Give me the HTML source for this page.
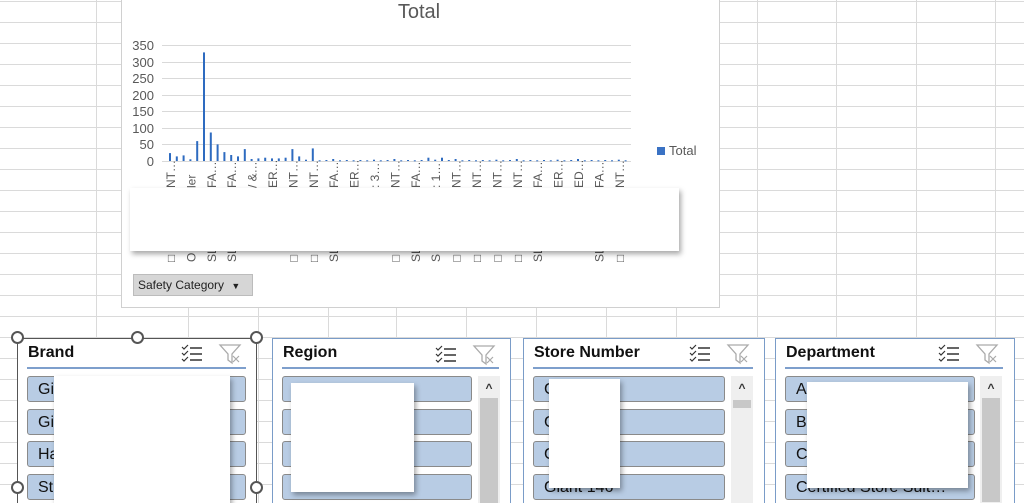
<!DOCTYPE html>
<html><head><meta charset="utf-8"><style>
*{margin:0;padding:0;box-sizing:border-box}
html,body{width:1024px;height:503px;overflow:hidden}
body{background:#fff;position:relative;font-family:"Liberation Sans",Arial,sans-serif}
.abs{position:absolute}
.slicer{position:absolute;top:338px;height:170px;border:1px solid #7a9cc8;background:#fff;overflow:hidden}
.slicer .hd{position:absolute;left:10px;top:5px;font-weight:bold;font-size:16px;color:#111}
.slicer .ln{position:absolute;left:9px;top:28px;height:2px;background:#7e9fcc}
.item{position:absolute;height:26px;background:#b8cce4;border:1px solid #8a8a8a;border-radius:3px;font-size:16px;line-height:25px;padding-left:10px;color:#111;white-space:nowrap;overflow:hidden}
.sb{position:absolute;width:22px;top:37px;height:140px;background:#efefef}
.sb .th{position:absolute;left:2px;right:2px;background:#c8c8c8}
.sb .ar{position:absolute;left:0;right:0;top:0;height:22px;text-align:center;font-size:12px;font-weight:bold;color:#333;line-height:24px}
.ov{position:absolute;background:#fff;box-shadow:2px 3px 5px rgba(0,0,0,.35)}
.h{position:absolute;width:13px;height:13px;border:2px solid #555;border-radius:50%;background:#fff}
</style></head><body>
<svg class="abs" style="left:0;top:0" width="1024" height="503">
<g stroke="#dadada" stroke-width="1" id="grid"></g>
</svg>
<div class="abs" style="left:121px;top:-2px;width:599px;height:310px;background:#fff;border:1px solid #d0d0d0"></div>
<svg class="abs" style="left:0;top:0" width="1024" height="503" id="ch">
<text x="419" y="18" font-size="20" fill="#595959" text-anchor="middle" font-family="Liberation Sans">Total</text>
<g font-size="13" fill="#595959" text-anchor="end" font-family="Liberation Sans">
<text x="154" y="50">350</text><text x="154" y="67">300</text><text x="154" y="83">250</text><text x="154" y="100">200</text><text x="154" y="116">150</text><text x="154" y="133">100</text><text x="154" y="149">50</text><text x="154" y="166">0</text>
</g>
<g stroke="#d9d9d9" stroke-width="1">
<line x1="162" x2="631" y1="45.5" y2="45.5"/><line x1="162" x2="631" y1="62.5" y2="62.5"/><line x1="162" x2="631" y1="78.5" y2="78.5"/><line x1="162" x2="631" y1="95.5" y2="95.5"/><line x1="162" x2="631" y1="111.5" y2="111.5"/><line x1="162" x2="631" y1="128.5" y2="128.5"/><line x1="162" x2="631" y1="144.5" y2="144.5"/><line x1="162" x2="631" y1="161.5" y2="161.5"/>
</g>
<g id="bars" fill="#2e6bc0"></g>
<g id="lbl" font-size="12" fill="#595959" font-family="Liberation Sans"></g>
<rect x="657" y="147" width="8" height="8" fill="#3a72c4"/>
<text x="669" y="155" font-size="13" fill="#595959" font-family="Liberation Sans">Total</text>
</svg>
<div class="ov" style="left:130px;top:188px;width:549px;height:63px"></div>
<div class="abs" style="left:133px;top:274px;width:120px;height:22px;background:#d6d6d6;border:1px solid #bcbcbc;font-size:12px;line-height:21px;padding-left:4px;color:#222">Safety Category <span style="font-size:9px;margin-left:4px">▼</span></div>

<div class="slicer" style="left:17px;width:240px;border-color:#555">
<div class="hd">Brand</div><div class="ln" style="width:219px"></div>
<div class="item" style="left:9px;top:37px;width:219px">Gi</div>
<div class="item" style="left:9px;top:70px;width:219px">Gi</div>
<div class="item" style="left:9px;top:102px;width:219px">Ha</div>
<div class="item" style="left:9px;top:135px;width:219px">St</div>
</div>
<div class="slicer" style="left:272px;width:239px">
<div class="hd">Region</div><div class="ln" style="width:217px"></div>
<div class="item" style="left:9px;top:37px;width:190px"></div>
<div class="item" style="left:9px;top:70px;width:190px"></div>
<div class="item" style="left:9px;top:102px;width:190px"></div>
<div class="item" style="left:9px;top:135px;width:190px"></div>
<div class="sb" style="left:205px"><div class="ar">^</div><div class="th" style="top:22px;height:120px"></div></div>
</div>
<div class="slicer" style="left:523px;width:242px">
<div class="hd">Store Number</div><div class="ln" style="width:220px"></div>
<div class="item" style="left:9px;top:37px;width:192px">G</div>
<div class="item" style="left:9px;top:70px;width:192px">G</div>
<div class="item" style="left:9px;top:102px;width:192px">G</div>
<div class="item" style="left:9px;top:135px;width:192px">Giant 146</div>
<div class="sb" style="left:207px"><div class="ar">^</div><div class="th" style="top:24px;height:8px"></div></div>
</div>
<div class="slicer" style="left:775px;width:240px">
<div class="hd">Department</div><div class="ln" style="width:218px"></div>
<div class="item" style="left:9px;top:37px;width:190px">Assistant Store Ma</div>
<div class="item" style="left:9px;top:70px;width:190px">B</div>
<div class="item" style="left:9px;top:102px;width:190px">C</div>
<div class="item" style="left:9px;top:135px;width:190px">Certified Store Suit…</div>
<div class="sb" style="left:204px"><div class="ar">^</div><div class="th" style="top:22px;height:104px"></div></div>
</div>
<svg class="abs" style="left:0;top:0" width="1024" height="503" id="icons"></svg>
<div class="ov" style="left:54px;top:376px;width:176px;height:130px"></div>
<div class="ov" style="left:291px;top:383px;width:123px;height:109px"></div>
<div class="ov" style="left:549px;top:379px;width:71px;height:109px"></div>
<div class="ov" style="left:807px;top:382px;width:161px;height:106px"></div>
<div class="h" style="left:11px;top:331px"></div><div class="h" style="left:131px;top:331px"></div><div class="h" style="left:250px;top:331px"></div>
<div class="h" style="left:11px;top:481px"></div><div class="h" style="left:250px;top:481px"></div>
<script>
var ns="http://www.w3.org/2000/svg";
function el(p,t,a){var e=document.createElementNS(ns,t);for(var k in a)e.setAttribute(k,a[k]);p.appendChild(e);return e}
var g=document.getElementById('grid');
for(var y=1.5;y<503;y+=21)el(g,'line',{x1:0,x2:1024,y1:y,y2:y});
[96,188,258,328,396,466,536,606,676,757,836,916,995].forEach(function(x){el(g,'line',{x1:x+.5,x2:x+.5,y1:0,y2:503})});
var v=[24,14,17,5,60,328,86,50,27,18,14,36,6,8,10,8,8,10,36,14,4,38];
for(var i=v.length;i<68;i++)v.push([2,3,2,4,2,3,6,2,3][i%9]);
v[38]=10;v[40]=10;v[37]=3;
var b=document.getElementById('bars');
for(var i=0;i<68;i++){var h=v[i]*0.331;el(b,'rect',{x:(169+i*6.8).toFixed(1),y:(161-h).toFixed(1),width:2,height:Math.max(h,1).toFixed(1)})}
var L=["NT…","ler","FA…","FA…","/ &…","ER…","NT…","NT…","FA…","ER…",": 3…","NT…","FA…",": 1…","NT…","NT…","NT…","NT…","FA…","ER…","ED…","FA…","NT…"];
var lg=document.getElementById('lbl');
L.forEach(function(s,i){var x=175+i*20.4;var t=el(lg,'text',{x:0,y:0,transform:'translate('+x+',188) rotate(-90)','text-anchor':'start'});t.textContent=s;});
var bl=["□","O","SL","SL","","","□","□","SL","","","□","SL","S","□","□","□","□","SL","","","SL","□"];
bl.forEach(function(s,i){if(!s)return;var x=175+i*20.4;var t=el(lg,'text',{x:0,y:0,transform:'translate('+x+',262) rotate(-90)','text-anchor':'start'});t.textContent=s;});
var ic=document.getElementById('icons');
[[182,345],[436,346],[690,345],[939,345]].forEach(function(p){
 var x=p[0],y=p[1];
 for(var r=0;r<3;r++){el(ic,'path',{d:'M'+x+' '+(y+r*6+2)+' l2 2 l4 -4',stroke:'#333',fill:'none','stroke-width':1.2});el(ic,'line',{x1:x+8,x2:x+20,y1:y+r*6+3,y2:y+r*6+3,stroke:'#333','stroke-width':1.5})}
 var fx=x+38;el(ic,'path',{d:'M'+fx+' '+y+' h20 l-8 9 v9 l-4 -3 v-6 z',stroke:'#aaa',fill:'none','stroke-width':1.3});
 el(ic,'path',{d:'M'+(fx+13)+' '+(y+11)+' l6 6 M'+(fx+19)+' '+(y+11)+' l-6 6',stroke:'#aaa','stroke-width':1.2});
});
</script>
</body></html>
